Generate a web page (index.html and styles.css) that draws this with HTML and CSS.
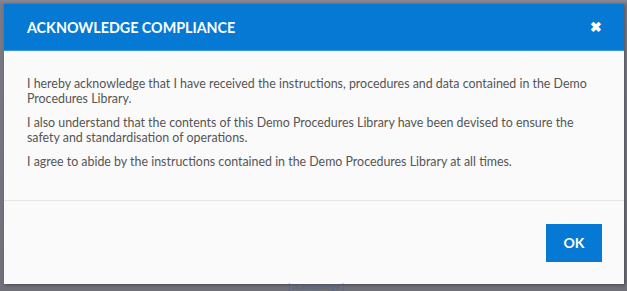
FILE: index.html
```html
<!DOCTYPE html>
<html>
<head>
<meta charset="utf-8">
<link rel="stylesheet" href="styles.css">
</head>
<body>
<div class="backdrop">
  <div class="modal">
    <div class="modal-header">
      <h4 class="modal-title">ACKNOWLEDGE COMPLIANCE</h4>
      <span class="close">&#10006;</span>
    </div>
    <div class="modal-body">
      <p>I hereby acknowledge that I have received the instructions, procedures and data contained in the Demo Procedures Library.</p>
      <p>I also understand that the contents of this Demo Procedures Library have been devised to ensure the safety and standardisation of operations.</p>
      <p>I agree to abide by the instructions contained in the Demo Procedures Library at all times.</p>
    </div>
    <div class="modal-footer">
      <button class="btn-ok">OK</button>
    </div>
  </div>
  <div class="behind">[ Acknowledge ]</div>
</div>
</body>
</html>
```
FILE: styles.css
```css
html, body {
  margin: 0;
  padding: 0;
}
body {
  width: 627px;
  height: 291px;
  overflow: hidden;
  background: #76767f;
  font-family: Lato, "Open Sans", sans-serif;
}
.backdrop {
  padding: 4px 0 0 4px;
  background: linear-gradient(to bottom, #8a8a96 0, #7a7a86 4px, #707079 100%);
  height: 287px;
}
.modal {
  width: 620px;
  background: #fafafa;
  box-shadow: 1px 1px 3px rgba(0,0,0,0.35);
}
.modal-header {
  height: 47px;
  background: #0579d3;
  border-bottom: 1px solid #3b95dd;
  box-sizing: border-box;
  display: flex;
  align-items: center;
  justify-content: space-between;
  padding: 0 22px 0 23px;
}
.modal-title {
  margin: 0;
  color: #ffffff;
  font-size: 14.3px;
  font-weight: 700;
  letter-spacing: 0;
}
.close {
  color: #ffffff;
  font-size: 14px;
  font-weight: 700;
  line-height: 1;
}
.modal-body {
  height: 150px;
  box-sizing: border-box;
  padding: 25px 23px 0 23px;
  border-bottom: 1px solid #e6e6e6;
  color: #555555;
  font-size: 12.4px;
  line-height: 15px;
}
.modal-body p {
  margin: 0 0 9px 0;
}
.modal-footer {
  height: 83px;
  display: flex;
  align-items: center;
  justify-content: flex-end;
  padding-right: 22px;
}
.btn-ok {
  width: 56px;
  height: 38px;
  border: none;
  background: #0579d3;
  color: #ffffff;
  font-family: Lato, sans-serif;
  font-size: 14px;
  font-weight: 700;
  padding: 0;
}
.behind {
  padding-left: 284px;
  font-size: 8px;
  line-height: 7px;
  color: #3f5f9a;
  opacity: 0.6;
}
```
